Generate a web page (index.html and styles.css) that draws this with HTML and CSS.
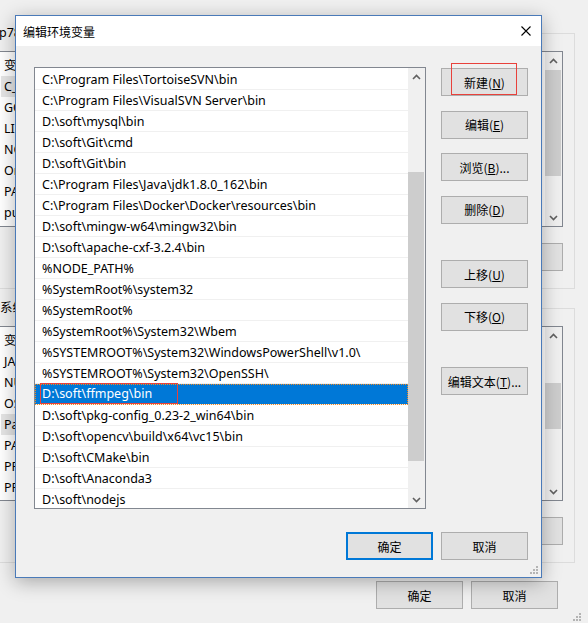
FILE: index.html
```html
<!DOCTYPE html>
<html>
<head>
    <meta charset="utf-8">
    <title>编辑环境变量</title>
    <link rel="stylesheet" href="styles.css">
</head>
<body>
<div class="desktop">

    <!-- parent window: 环境变量 (mostly hidden behind the dialog) -->
    <div class="env-win">
        <fieldset class="grp">
            <legend>p78</legend>
            <div class="lv">
                <div class="lv-items">
                    <div class="lv-head">变</div>
                    <div class="lv-row"><span class="cell sel-grey">C_</span></div>
                    <div class="lv-row"><span class="cell">GO</span></div>
                    <div class="lv-row"><span class="cell">LI</span></div>
                    <div class="lv-row"><span class="cell">NO</span></div>
                    <div class="lv-row"><span class="cell">On</span></div>
                    <div class="lv-row"><span class="cell">PA</span></div>
                    <div class="lv-row"><span class="cell">pu</span></div>
                </div>
                <div class="sb">
                    <div class="sb-btn"><svg width="9" height="6" viewBox="0 0 9 6"><path d="M1 5 L4.5 1.5 L8 5" /></svg></div>
                    <div class="sb-track"><div class="sb-thumb thumb-user"></div></div>
                    <div class="sb-btn"><svg width="9" height="6" viewBox="0 0 9 6"><path d="M1 1 L4.5 4.5 L8 1" /></svg></div>
                </div>
            </div>
            <div class="grp-btns"><span class="btn"></span></div>
        </fieldset>

        <fieldset class="grp grp-sys">
            <legend>系统</legend>
            <div class="lv lv-sys">
                <div class="lv-items">
                    <div class="lv-head">变</div>
                    <div class="lv-row"><span class="cell">JA</span></div>
                    <div class="lv-row"><span class="cell">NU</span></div>
                    <div class="lv-row"><span class="cell">OS</span></div>
                    <div class="lv-row"><span class="cell sel-grey">Pa</span></div>
                    <div class="lv-row"><span class="cell">PA</span></div>
                    <div class="lv-row"><span class="cell">PR</span></div>
                    <div class="lv-row"><span class="cell">PR</span></div>
                </div>
                <div class="sb">
                    <div class="sb-btn"><svg width="9" height="6" viewBox="0 0 9 6"><path d="M1 5 L4.5 1.5 L8 5" /></svg></div>
                    <div class="sb-track"><div class="sb-thumb thumb-sys"></div></div>
                    <div class="sb-btn"><svg width="9" height="6" viewBox="0 0 9 6"><path d="M1 1 L4.5 4.5 L8 1" /></svg></div>
                </div>
            </div>
            <div class="grp-btns"><span class="btn"></span></div>
        </fieldset>

        <div class="win-foot">
            <span class="btn">确定</span>
            <span class="btn">取消</span>
        </div>
        <svg class="grip" width="8" height="8" viewBox="0 0 8 8">
            <rect x="6" y="0" width="2" height="2" /><rect x="3" y="3" width="2" height="2" /><rect x="6" y="3" width="2" height="2" />
            <rect x="0" y="6" width="2" height="2" /><rect x="3" y="6" width="2" height="2" /><rect x="6" y="6" width="2" height="2" />
        </svg>
    </div>

    <!-- dialog: 编辑环境变量 -->
    <div class="dlg">
        <div class="dlg-title">
            <span>编辑环境变量</span>
            <svg class="close" width="10" height="10" viewBox="0 0 10 10"><path d="M0.5 0.5 L9.5 9.5 M9.5 0.5 L0.5 9.5" /></svg>
        </div>
        <div class="dlg-body">
            <div class="path-list">
                <div class="path-items">
                    <div class="path-row">C:\Program Files\TortoiseSVN\bin</div>
                    <div class="path-row">C:\Program Files\VisualSVN Server\bin</div>
                    <div class="path-row">D:\soft\mysql\bin</div>
                    <div class="path-row">D:\soft\Git\cmd</div>
                    <div class="path-row">D:\soft\Git\bin</div>
                    <div class="path-row">C:\Program Files\Java\jdk1.8.0_162\bin</div>
                    <div class="path-row">C:\Program Files\Docker\Docker\resources\bin</div>
                    <div class="path-row">D:\soft\mingw-w64\mingw32\bin</div>
                    <div class="path-row">D:\soft\apache-cxf-3.2.4\bin</div>
                    <div class="path-row">%NODE_PATH%</div>
                    <div class="path-row">%SystemRoot%\system32</div>
                    <div class="path-row">%SystemRoot%</div>
                    <div class="path-row">%SystemRoot%\System32\Wbem</div>
                    <div class="path-row">%SYSTEMROOT%\System32\WindowsPowerShell\v1.0\</div>
                    <div class="path-row">%SYSTEMROOT%\System32\OpenSSH\</div>
                    <div class="path-row selected"><span class="mark">D:\soft\ffmpeg\bin</span></div>
                    <div class="path-row">D:\soft\pkg-config_0.23-2_win64\bin</div>
                    <div class="path-row">D:\soft\opencv\build\x64\vc15\bin</div>
                    <div class="path-row">D:\soft\CMake\bin</div>
                    <div class="path-row">D:\soft\Anaconda3</div>
                    <div class="path-row">D:\soft\nodejs</div>
                </div>
                <div class="sb">
                    <div class="sb-btn"><svg width="9" height="6" viewBox="0 0 9 6"><path d="M1 5 L4.5 1.5 L8 5" /></svg></div>
                    <div class="sb-track"><div class="sb-thumb thumb-path"></div></div>
                    <div class="sb-btn"><svg width="9" height="6" viewBox="0 0 9 6"><path d="M1 1 L4.5 4.5 L8 1" /></svg></div>
                </div>
            </div>

            <div class="side">
                <span class="btn btn-new">新建(<u>N</u>)<span class="mark-box"></span></span>
                <span class="btn">编辑(<u>E</u>)</span>
                <span class="btn">浏览(<u>B</u>)...</span>
                <span class="btn">删除(<u>D</u>)</span>
                <span class="btn sep">上移(<u>U</u>)</span>
                <span class="btn">下移(<u>O</u>)</span>
                <span class="btn sep">编辑文本(<u>T</u>)...</span>
            </div>

            <div class="dlg-foot">
                <span class="btn btn-default">确定</span>
                <span class="btn">取消</span>
            </div>
        </div>
        <svg class="grip" width="8" height="8" viewBox="0 0 8 8">
            <rect x="6" y="0" width="2" height="2" /><rect x="3" y="3" width="2" height="2" /><rect x="6" y="3" width="2" height="2" />
            <rect x="0" y="6" width="2" height="2" /><rect x="3" y="6" width="2" height="2" /><rect x="6" y="6" width="2" height="2" />
        </svg>
    </div>

</div>
</body>
</html>
```

FILE: styles.css
```css
body {
    margin: 0;
    background-color: #f0f0f0;
    color: #000000;
    font-family: "Noto Sans", "Noto Sans CJK SC", sans-serif;
    font-size: 12.5px;
}

.desktop {
    position: relative;
    width: 588px;
    height: 623px;
    overflow: hidden;
}

/* parent window */
.env-win {
    position: absolute;
    left: -4px;
    top: 0;
    width: 592px;
    height: 623px;
    box-sizing: border-box;
    padding: 26px 13px 0 0;
}

.grp {
    margin: 0;
    padding: 11px 11px 17px 1px;
    border: 1px solid #dcdcdc;
    min-width: 0;
}

.grp legend {
    padding: 0;
    margin-left: 1px;
    line-height: 14px;
    font-family: "Noto Sans", "Noto Sans CJK SC", sans-serif;
}

.grp-sys {
    margin-top: 12px;
}

.grp-sys legend {
    margin-left: 2px;
}

.lv {
    height: 176px;
    box-sizing: border-box;
    border: 1px solid #828790;
    background-color: #ffffff;
    display: flex;
}

.lv-sys {
    height: 175px;
}

.lv-items {
    flex: 1;
    padding-top: 3px;
    overflow: hidden;
}

.lv-head,
.lv-row {
    height: 21px;
    line-height: 21px;
    padding-left: 2px;
    white-space: nowrap;
}

.lv-head {
    padding-left: 5px;
}

.cell {
    display: inline-block;
    width: 160px;
    padding-left: 3px;
}

.sel-grey {
    background-color: #e5e5e5;
}

.grp-btns {
    display: flex;
    justify-content: flex-end;
    margin-top: 16px;
}

.grp-btns .btn {
    width: 87px;
}

.win-foot {
    display: flex;
    justify-content: flex-end;
    gap: 8px;
    margin-top: 18px;
    margin-right: 17px;
}

.win-foot .btn {
    width: 87px;
}

.env-win .grip {
    position: absolute;
    right: 7px;
    bottom: 2px;
}

/* scrollbars */
.sb {
    width: 17px;
    background-color: #f0f0f0;
    display: flex;
    flex-direction: column;
}

.sb-btn {
    height: 17px;
    display: flex;
    align-items: center;
    justify-content: center;
}

.sb-btn svg path {
    fill: none;
    stroke: #606060;
    stroke-width: 1.6;
}

.sb-track {
    flex: 1;
}

.sb-thumb {
    background-color: #cdcdcd;
    margin-right: 1px;
}

.thumb-user {
    margin-top: 1px;
    height: 106px;
}

.thumb-sys {
    margin-top: 39px;
    height: 46px;
}

.thumb-path {
    margin-top: 87px;
    height: 289px;
}

/* dialog */
.dlg {
    position: absolute;
    left: 15px;
    top: 15px;
    width: 527px;
    height: 563px;
    box-sizing: border-box;
    border: 1px solid #4a7ab8;
    background-color: #f0f0f0;
    box-shadow: 0 4px 18px rgba(0, 0, 0, 0.3);
    display: flex;
    flex-direction: column;
}

.dlg-title {
    height: 30px;
    background-color: #ffffff;
    display: flex;
    align-items: center;
    justify-content: space-between;
    padding-left: 7px;
    font-family: "Noto Sans CJK SC", sans-serif;
    font-size: 12px;
}

.close {
    margin-right: 10px;
}

.close path {
    stroke: #000000;
    stroke-width: 1.1;
}

.dlg-body {
    flex: 1;
    display: grid;
    grid-template-columns: 392px 87px;
    grid-template-rows: 442px auto;
    column-gap: 15px;
    row-gap: 23px;
    padding: 21px 13px 0 18px;
}

.path-list {
    border: 1px solid #828790;
    background-color: #ffffff;
    display: flex;
    overflow: hidden;
}

.path-items {
    flex: 1;
    padding-top: 1px;
    overflow: hidden;
}

.path-row {
    height: 21px;
    box-sizing: border-box;
    line-height: 21px;
    padding-left: 7px;
    border-bottom: 1px solid #f0f0f0;
    white-space: nowrap;
}

.path-row.selected {
    padding-left: 5px;
    background-color: #0078d7;
    color: #ffffff;
    outline: 1px dotted #f08a24;
    outline-offset: -1px;
}

.mark {
    display: inline-block;
    vertical-align: top;
    width: 138px;
    height: 21px;
    margin-top: -1px;
    box-sizing: border-box;
    line-height: 20px;
    padding-left: 1px;
    border: 1px solid #e8413b;
}

.side {
    display: flex;
    flex-direction: column;
    gap: 14.5px;
    padding-top: 1px;
}

.side .sep {
    margin-top: 22px;
}

.btn {
    height: 28px;
    box-sizing: border-box;
    border: 1px solid #adadad;
    background-color: #e1e1e1;
    display: flex;
    align-items: center;
    justify-content: center;
    font-family: "Noto Sans CJK SC", sans-serif;
    font-size: 12px;
    white-space: nowrap;
}

.btn u {
    text-underline-offset: 1px;
}

.btn-new {
    position: relative;
}

.mark-box {
    position: absolute;
    left: 9px;
    top: -6px;
    width: 66px;
    height: 32px;
    box-sizing: border-box;
    border: 1px solid #e8413b;
}

.btn-default {
    border: 2px solid #0078d7;
}

.dlg-foot {
    grid-column: 1 / -1;
    display: flex;
    justify-content: flex-end;
    gap: 8px;
}

.dlg-foot .btn {
    width: 87px;
}

.dlg .grip {
    position: absolute;
    right: 3px;
    bottom: 3px;
}

.grip rect {
    fill: #b4b4b4;
}
```
